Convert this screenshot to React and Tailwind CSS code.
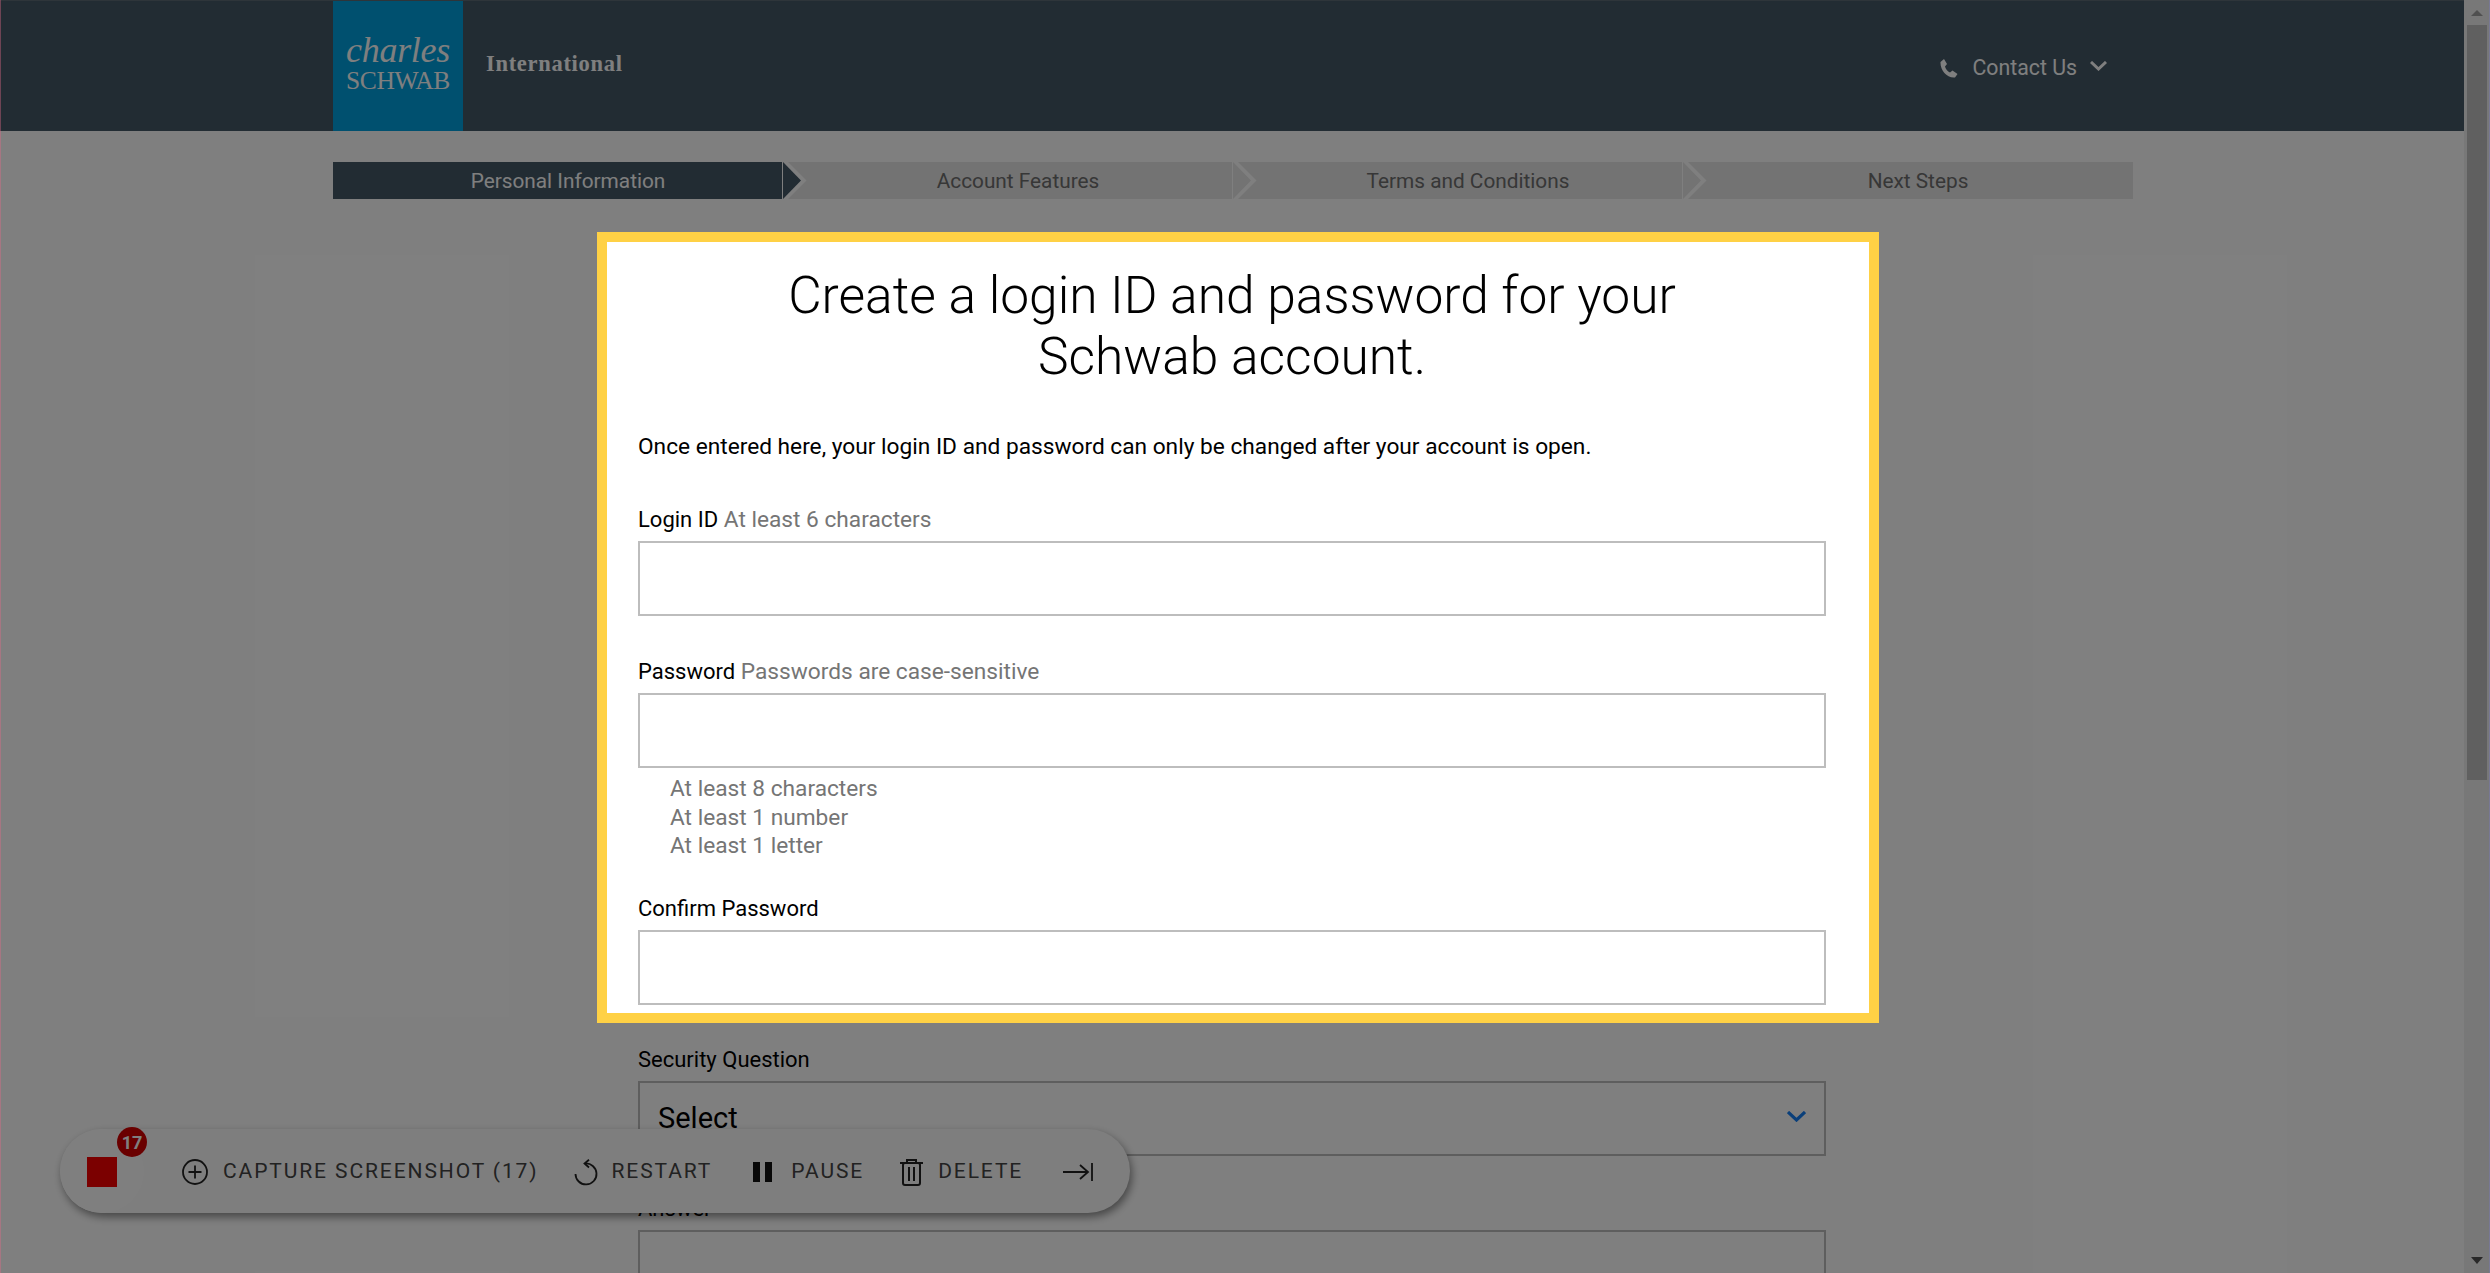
import React from "react";

const plex = "font-['Roboto','Liberation_Sans',sans-serif]";

function Step({ label, active, last }) {
    return (
        <div className={`relative flex-1 flex items-center justify-center pl-[20px] pt-[2px] text-[20.8px] ${active ? "bg-[#445866] text-white" : "bg-[#e6e6e6] text-[#6e6e6e]"}`}>
            <span>{label}</span>
            {!last && (
                <svg className="absolute left-full top-0 z-[1] -ml-px" width="26" height="37" viewBox="0 0 26 37">
                    <path d="M0 0 H6 L24.5 18.5 L6 37 H0 Z" fill="#ffffff" />
                    <path d="M1 0 L19 18.5 L1 37 Z" fill={active ? "#445866" : "#e6e6e6"} />
                </svg>
            )}
        </div>
    );
}

function Field({ label, hint, children }) {
    return (
        <div>
            <div className="h-[30px] leading-[33px] text-[22px] text-black">
                {label}
                {hint && <span className="text-[22.7px] text-[#757575]"> {hint}</span>}
            </div>
            {children}
        </div>
    );
}

function Input() {
    return <div className="mt-[8px] h-[75px] border-2 border-[#bdbdbd] bg-white"></div>;
}

export default function App() {
    return (
        <div className={`relative h-screen overflow-hidden flex bg-white ${plex}`}>
            <div className="flex-1 min-w-0">
                <header className="h-[131px] bg-[#445866] border-t border-[#5d6a75] pl-[333px] flex">
                    <div className="w-[130px] bg-[#00a0df] text-white font-['Liberation_Serif',serif] flex flex-col items-center pt-[29px]">
                        <span className="italic text-[36px] leading-[40px] tracking-[-0.3px]">charles</span>
                        <span className="text-[25.5px] leading-[24px] -mt-[1px] tracking-[-0.4px]">SCHWAB</span>
                    </div>
                    <div className="ml-[23px] mt-[49px] font-['Liberation_Serif',serif] font-bold text-[22.5px] leading-[28px] text-white tracking-[0.7px]">International</div>
                    <div className="ml-auto mr-[357px] mt-[53px] h-[28px] flex items-center text-[21.3px] text-white">
                        <svg width="19" height="19" viewBox="0 0 19 19" fill="#ffffff">
                            <path d="M5 0 L8 5 L6 7.5 C6.5 10 8.5 12.5 11 13.5 L13.5 11.5 L18.5 15 L16 18.5 C8 19.5 1 11 1.5 3 Z" />
                        </svg>
                        <span className="ml-[14px]">Contact Us</span>
                        <svg className="ml-[13px] -mt-[4px]" width="17" height="10" viewBox="0 0 17 10" fill="none" stroke="#ffffff" strokeWidth="3">
                            <path d="M1 1 L8.5 8 L16 1" />
                        </svg>
                    </div>
                </header>

                <div className="mt-[31px] ml-[333px] w-[1800px] h-[37px] flex">
                    <Step label="Personal Information" active />
                    <Step label="Account Features" />
                    <Step label="Terms and Conditions" />
                    <Step label="Next Steps" last />
                </div>

                <section className="relative z-20 mt-[33px] ml-[597px] w-[1282px] h-[791px] border-[10px] border-[#ffd145] bg-white pl-[31px] pr-[43px]">
                    <h1 className="pt-[23px] text-center font-light text-[51.5px] leading-[61px] text-black">
                        Create a login ID and password for your<br />Schwab account.
                    </h1>
                    <p className="mt-[45px] text-[22.7px] leading-[30px] text-black">Once entered here, your login ID and password can only be changed after your account is open.</p>
                    <div className="mt-[41px]">
                        <Field label="Login ID" hint="At least 6 characters"><Input /></Field>
                    </div>
                    <div className="mt-[39px]">
                        <Field label="Password" hint="Passwords are case-sensitive"><Input /></Field>
                    </div>
                    <ul className="mt-[7px] pl-[32px] text-[22.7px] leading-[28.5px] text-[#757575]">
                        <li>At least 8 characters</li>
                        <li>At least 1 number</li>
                        <li>At least 1 letter</li>
                    </ul>
                    <div className="mt-[31px]">
                        <Field label="Confirm Password"><Input /></Field>
                    </div>
                </section>

                <div className="ml-[638px] w-[1188px]">
                    <div className="mt-[20px]">
                        <Field label="Security Question">
                            <div className="mt-[8px] h-[75px] border-2 border-[#bdbdbd] flex items-center justify-between pl-[18px] pr-[18px] text-[29px] text-black">
                                Select
                                <svg className="-mt-[4px]" width="19" height="11" viewBox="0 0 19 11" fill="none" stroke="#147ef4" strokeWidth="3.2">
                                    <path d="M1 1 L9.5 9 L18 1" />
                                </svg>
                            </div>
                        </Field>
                    </div>
                    <div className="mt-[36px]">
                        <Field label="Answer"><Input /></Field>
                    </div>
                </div>
            </div>

            <div className="w-[26px] shrink-0 bg-[#f1f1f1] flex flex-col items-center">
                <div className="h-[25px] flex items-center justify-center">
                    <div className="w-0 h-0 border-x-[6px] border-x-transparent border-b-[6px] border-b-[#a0a0a0]"></div>
                </div>
                <div className="w-[20px] h-[755px] bg-[#c1c1c1]"></div>
                <div className="flex-1"></div>
                <div className="h-[25px] flex items-center justify-center">
                    <div className="w-0 h-0 border-x-[6px] border-x-transparent border-t-[7px] border-t-[#505050]"></div>
                </div>
            </div>

            {/* recorder pill */}
            <div className="absolute left-[60px] top-[1129px] w-[1070px] h-[84px] pt-[2px] rounded-full bg-[#fcfcfc] shadow-[2px_4px_8px_rgba(0,0,0,0.45)] flex items-center text-[21px] tracking-[1.9px] text-[#444444]">
                <div className="relative -mt-[2px] w-[84px] h-[84px] rounded-full bg-white flex items-center justify-center shrink-0">
                    <div className="w-[30px] h-[30px] mt-[2px] bg-[#f60000]"></div>
                    <div className="absolute left-[57px] -top-[2px] w-[30px] h-[30px] rounded-full bg-[#d40000] text-white text-[18px] font-bold tracking-normal flex items-center justify-center">17</div>
                </div>
                <svg className="ml-[38px] shrink-0" width="26" height="26" viewBox="0 0 26 26" fill="none" stroke="#222222" strokeWidth="1.8">
                    <circle cx="13" cy="13" r="12" />
                    <path d="M13 6.5 V19.5 M6.5 13 H19.5" />
                </svg>
                <span className="ml-[15px]">CAPTURE SCREENSHOT (17)</span>
                <svg className="ml-[35px] shrink-0" width="24" height="27" viewBox="0 0 24 27" fill="none" stroke="#222222" strokeWidth="1.8">
                    <path d="M11 4.5 A10.5 10.5 0 1 1 1.5 15" />
                    <path d="M15 0.7 L10.5 4.5 L15 8.5" />
                </svg>
                <span className="ml-[14px]">RESTART</span>
                <div className="ml-[41px] w-[19px] h-[20px] flex justify-between shrink-0">
                    <div className="w-[7px] bg-[#111111]"></div>
                    <div className="w-[7px] bg-[#111111]"></div>
                </div>
                <span className="ml-[19px]">PAUSE</span>
                <svg className="ml-[36px] shrink-0" width="23" height="27" viewBox="0 0 23 27" fill="none" stroke="#222222" strokeWidth="2">
                    <path d="M0 4 H23 M7 4 V1 H16 V4" />
                    <rect x="3" y="4" width="17" height="22" rx="2" />
                    <path d="M9 8 V22 M14 8 V22" />
                </svg>
                <span className="ml-[15px]">DELETE</span>
                <svg className="ml-[40px] shrink-0" width="30" height="20" viewBox="0 0 30 20" fill="none" stroke="#222222" strokeWidth="1.8">
                    <path d="M0 10 H25 M17 3 L25 10 L17 17 M29 1 V19" />
                </svg>
            </div>

            <div className="absolute inset-0 z-10 bg-black/50"></div>
            <div className="absolute inset-y-0 left-0 z-30 w-px bg-[#e26a86]/40"></div>
            <div className="absolute inset-y-0 right-0 z-30 w-px bg-[#7b7bd8]/30"></div>
        </div>
    );
}
